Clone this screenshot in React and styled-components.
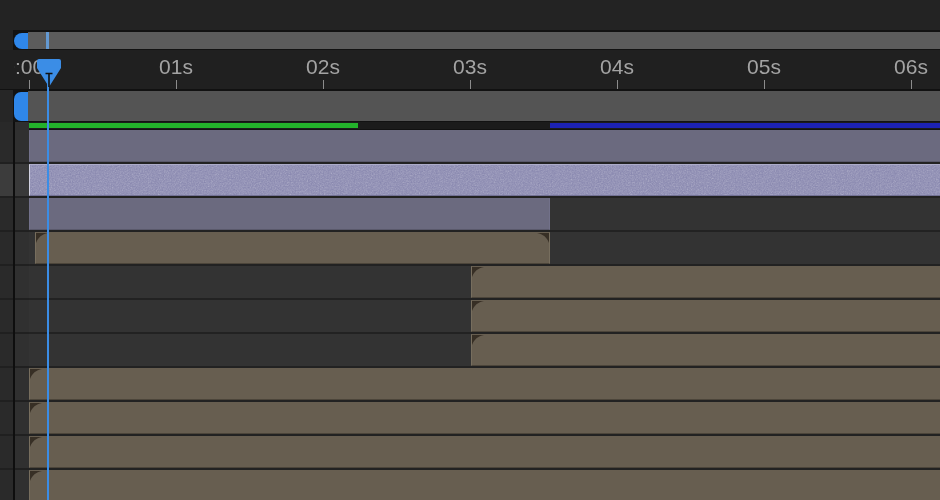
import React from "react";
import styled, { createGlobalStyle } from "styled-components";

const PX_PER_SEC = 147;
const TRACK_X = 29;

const GlobalStyle = createGlobalStyle`
  html, body {
    margin: 0;
    padding: 0;
    background: #232323;
    font-family: "Liberation Sans", Arial, sans-serif;
  }
`;

const Timeline = styled.div`
  position: relative;
  width: 940px;
  height: 500px;
  overflow: hidden;
  background: #232323;
`;

const TopSpace = styled.div`
  height: 30px;
`;

const NavRow = styled.div`
  display: grid;
  grid-template-columns: 13px 1px 14px 1fr;
  height: 20px;
  background: #121212;
`;

const Spacer = styled.div`
  background: ${p => p.$bg || "#232323"};
`;

const Handle = styled.div`
  margin: ${p => p.$margin};
  background: #2f87ea;
  border-radius: ${p => p.$radius}px 0 0 ${p => p.$radius}px;
`;

const NavBar = styled.div`
  margin: 2px 0 1px;
  background: #5c5c5c;
`;

const NavIndicator = styled.div`
  position: absolute;
  left: 46px;
  top: 32px;
  width: 3px;
  height: 17px;
  background: #6399d2;
`;

const Ruler = styled.div`
  display: grid;
  grid-template-columns: 14px 1fr;
  height: 40px;
  background: #202020;
  border-bottom: 1px solid #111;
  box-sizing: border-box;
`;

const RulerScale = styled.div`
  display: flex;
  overflow: hidden;
`;

const Second = styled.div`
  flex: 0 0 ${PX_PER_SEC}px;
  display: flex;
  flex-direction: column;
  align-items: center;
  &:first-child {
    margin-left: ${TRACK_X - 14 - PX_PER_SEC / 2}px;
  }
`;

const Label = styled.span`
  margin-top: 4px;
  height: 26px;
  font-size: 21px;
  line-height: 26px;
  color: #a3a3a3;
  white-space: nowrap;
`;

const Tick = styled.span`
  width: 1px;
  height: 9px;
  background: #8c8c8c;
`;

const WorkRow = styled.div`
  display: grid;
  grid-template-columns: 13px 1px 14px 1fr;
  height: 32px;
  background: #121212;
`;

const WorkBar = styled.div`
  margin: 1px 0 1px;
  background: #545454;
`;

const RenderRow = styled.div`
  display: grid;
  grid-template-columns: 13px 2px 14px 1fr;
  height: 8px;
`;

const RenderTrack = styled.div`
  display: flex;
  align-items: center;
  background: #1b1b1b;
  border-bottom: 1px solid #111;
`;

const RenderLine = styled.div`
  height: 5px;
  margin-left: ${p => p.$start}px;
  width: ${p => (p.$width ? `${p.$width}px` : "auto")};
  flex: ${p => (p.$width ? "none" : 1)};
  background: ${p => p.$color};
`;

const LayerRow = styled.div`
  display: grid;
  grid-template-columns: 13px 2px 14px 1fr;
  height: 34px;
`;

const Gutter = styled.div`
  background: ${p => (p.$selected ? p.$hi : p.$bg)};
  border-bottom: 2px solid #202020;
`;

const Divider = styled.div`
  background: #0e0e0e;
`;

const Track = styled.div`
  display: flex;
  background: #333;
  border-bottom: 2px solid #222;
  overflow: hidden;
`;

const colors = {
  solid: { bg: "#6b6a7f", edge: "#72718a", bottom: "#5a596b" },
  selected: { bg: "#8786ae", edge: "#d2d2e2", bottom: "#727194" },
  footage: { bg: "#675e50", edge: "#776e5e", bottom: "#4c453a" }
};

const Bar = styled.div`
  position: relative;
  margin-left: ${p => p.$start}px;
  width: ${p => (p.$width ? `${p.$width}px` : "auto")};
  flex: ${p => (p.$width ? "none" : 1)};
  background: ${p => colors[p.$kind].bg};
  border-left: 1px solid ${p => colors[p.$kind].edge};
  border-right: ${p => (p.$width ? `1px solid ${colors[p.$kind].edge}` : "none")};
  border-top: 1px solid
    ${p => (p.$kind === "selected" ? "#adacca" : colors[p.$kind].bg)};
  border-bottom: 1px solid ${p => colors[p.$kind].bottom};
  box-sizing: border-box;
  overflow: hidden;
`;

const Noise = styled.svg`
  position: absolute;
  inset: 0;
  width: 100%;
  height: 100%;
  opacity: 0.5;
  mix-blend-mode: overlay;
`;

const Corner = styled.svg`
  position: absolute;
  top: 0;
  ${p => (p.$right ? "right: 0; transform: scaleX(-1);" : "left: 0;")}
  width: 12px;
  height: 10px;
`;

const PlayheadLine = styled.div`
  position: absolute;
  left: 47px;
  top: 80px;
  bottom: 0;
  width: 2px;
  background: #3b8de6;
`;

const PlayheadHead = styled.svg`
  position: absolute;
  left: 36px;
  top: 59px;
  width: 26px;
  height: 28px;
`;

const CornerMark = ({ right }) => (
  <Corner $right={right} viewBox="0 0 12 10">
    <path d="M0 0 H12 C6 1 2 4.5 0 10 Z" fill="#372f25" />
  </Corner>
);

const layers = [
  { kind: "solid", start: 0 },
  { kind: "selected", start: 0 },
  { kind: "solid", start: 0, width: 521 },
  { kind: "footage", start: 6, width: 515, corners: ["left", "right"] },
  { kind: "footage", start: 442, corners: ["left"] },
  { kind: "footage", start: 442, corners: ["left"] },
  { kind: "footage", start: 442, corners: ["left"] },
  { kind: "footage", start: 0, corners: ["left"] },
  { kind: "footage", start: 0, corners: ["left"] },
  { kind: "footage", start: 0, corners: ["left"] },
  { kind: "footage", start: 0, corners: ["left"] }
];

const seconds = ["0:00s", "01s", "02s", "03s", "04s", "05s", "06s"];

const App = () => (
  <>
    <GlobalStyle />
    <Timeline>
      <TopSpace />
      <NavRow>
        <Spacer />
        <Spacer $bg="#121212" />
        <Handle $margin="3px 0 1px" $radius={8} />
        <NavBar />
      </NavRow>
      <Ruler>
        <Spacer $bg="#202020" />
        <RulerScale>
          {seconds.map(s => (
            <Second key={s}>
              <Label>{s}</Label>
              <Tick />
            </Second>
          ))}
        </RulerScale>
      </Ruler>
      <WorkRow>
        <Spacer $bg="#262626" />
        <Spacer $bg="#121212" />
        <Handle $margin="2px 0 1px" $radius={7} />
        <WorkBar />
      </WorkRow>
      <RenderRow>
        <Spacer $bg="#292929" />
        <Divider />
        <Spacer $bg="#2e2e2e" />
        <RenderTrack>
          <RenderLine $start={0} $width={329} $color="#23b12b" />
          <RenderLine $start={192} $color="#1c22b3" />
        </RenderTrack>
      </RenderRow>
      {layers.map((l, i) => {
        const selected = l.kind === "selected";
        return (
          <LayerRow key={i}>
            <Gutter $selected={selected} $bg="#2a2a2a" $hi="#3c3c3c" />
            <Divider />
            <Gutter $selected={selected} $bg="#303030" $hi="#393939" />
            <Track>
              <Bar $kind={l.kind} $start={l.start} $width={l.width}>
                {selected && (
                  <Noise>
                    <filter id="grain">
                      <feTurbulence
                        type="fractalNoise"
                        baseFrequency="0.75"
                        numOctaves="3"
                      />
                      <feColorMatrix type="saturate" values="0" />
                    </filter>
                    <rect width="100%" height="100%" filter="url(#grain)" />
                  </Noise>
                )}
                {l.corners &&
                  l.corners.map(c => (
                    <CornerMark key={c} right={c === "right"} />
                  ))}
              </Bar>
            </Track>
          </LayerRow>
        );
      })}
      <NavIndicator />
      <PlayheadLine />
      <PlayheadHead viewBox="0 0 26 28">
        <path
          d="M3 0 H23 Q25 0 25 2 V9 L13.6 27 Q13 28 12.4 27 L1 9 V2 Q1 0 3 0 Z"
          fill="#3b8de6"
        />
        <path d="M9.5 14.5 H16.5 M13 14.5 V28" stroke="#111" strokeWidth="1.6" />
      </PlayheadHead>
    </Timeline>
  </>
);

export default App;
